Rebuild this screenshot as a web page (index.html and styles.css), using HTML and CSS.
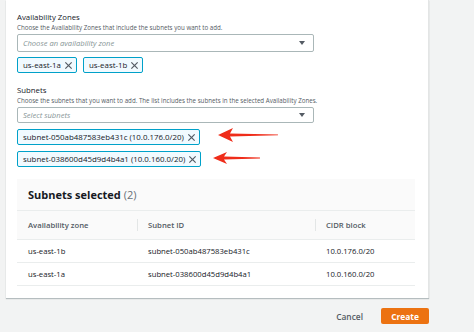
FILE: index.html
```html
<!DOCTYPE html>
<html lang="en">
<head>
  <meta charset="UTF-8" />
  <meta name="viewport" content="width=device-width, initial-scale=1.0"/>
  <title>Create subnet</title>
  <link rel="stylesheet" href="styles.css">
</head>
<body>
  <div class="panel">
    <div class="field">
      <div class="label">Availability Zones</div>
      <div class="desc">Choose the Availability Zones that include the subnets you want to add.</div>
      <div class="select az-select">
        <span class="placeholder">Choose an availability zone</span>
        <span class="caret"></span>
      </div>
      <div class="tokens tokens-row">
        <div class="token">us-east-1a <svg class="x" viewBox="0 0 10 10"><path d="M1.5 1.5 L8.5 8.5 M8.5 1.5 L1.5 8.5"/></svg></div>
        <div class="token">us-east-1b <svg class="x" viewBox="0 0 10 10"><path d="M1.5 1.5 L8.5 8.5 M8.5 1.5 L1.5 8.5"/></svg></div>
      </div>
    </div>

    <div class="field subnets">
      <div class="label">Subnets</div>
      <div class="desc">Choose the subnets that you want to add. The list includes the subnets in the selected Availability Zones.</div>
      <div class="select subnet-select">
        <span class="placeholder">Select subnets</span>
        <span class="caret"></span>
      </div>
      <div class="tokens">
        <div class="token">subnet-050ab487583eb431c (10.0.176.0/20) <svg class="x" viewBox="0 0 10 10"><path d="M1.5 1.5 L8.5 8.5 M8.5 1.5 L1.5 8.5"/></svg></div>
        <div class="token">subnet-038600d45d9d4b4a1 (10.0.160.0/20) <svg class="x" viewBox="0 0 10 10"><path d="M1.5 1.5 L8.5 8.5 M8.5 1.5 L1.5 8.5"/></svg></div>
      </div>
      <!-- annotation arrows drawn over the screenshot -->
      <svg class="arrow arrow-1" viewBox="0 0 75 20"><polygon points="8,10 23,3 20,8.6 68,9.4 68,10.2 20,11.6 23,17"/></svg>
      <svg class="arrow arrow-2" viewBox="0 0 75 20"><polygon points="8,10 22,4 19,8.6 55,9.5 55,10.4 19,11.6 22,16"/></svg>
    </div>

    <div class="selected">
      <div class="selected-head">Subnets selected <span class="count">(2)</span></div>
      <table>
        <thead>
          <tr>
            <th class="c1">Availability zone</th>
            <th class="c2"><span>Subnet ID</span></th>
            <th class="c3"><span>CIDR block</span></th>
          </tr>
        </thead>
        <tbody>
          <tr>
            <td>us-east-1b</td>
            <td>subnet-050ab487583eb431c</td>
            <td>10.0.176.0/20</td>
          </tr>
          <tr>
            <td>us-east-1a</td>
            <td>subnet-038600d45d9d4b4a1</td>
            <td>10.0.160.0/20</td>
          </tr>
        </tbody>
      </table>
    </div>
  </div>

  <footer>
    <span class="cancel">Cancel</span>
    <button class="create">Create</button>
  </footer>
</body>
</html>
```

FILE: styles.css
```css
:root {
  --bg: #f2f3f3;
  --text: #16191f;
  --muted: #545b64;
  --line: #eaeded;
  --token-bg: #f1faff;
  --token-border: #00a1c9;
  --orange: #ec7211;
  --arrow: #ef2d1a;
}

body {
  font-family: 'Open Sans', 'Noto Sans', sans-serif;
  background: var(--bg);
  color: var(--text);
  margin: 0;
  padding: 0;
}

.panel {
  position: relative;
  box-sizing: border-box;
  width: 423px;
  margin-left: 6px;
  padding: 12px 11px 12px 11px;
  background: #fff;
  border-right: 1px solid #e3e5e5;
  box-shadow: 0 1px 1px rgba(0, 28, 36, 0.25);
}

.label {
  font-size: 7.8px;
  line-height: 11px;
  color: var(--text);
}

.desc {
  font-size: 6.2px;
  line-height: 9px;
  color: var(--muted);
}

.select {
  box-sizing: border-box;
  width: 297px;
  height: 18px;
  margin-top: 2px;
  border: 1px solid #aab7b8;
  border-radius: 2px;
  display: flex;
  align-items: center;
  justify-content: space-between;
  padding: 0 8px 0 5px;
}

.subnet-select {
  height: 16px;
}

.placeholder {
  font-size: 7.6px;
  font-style: italic;
  color: #879596;
}

.caret {
  width: 0;
  height: 0;
  border-left: 3.5px solid transparent;
  border-right: 3.5px solid transparent;
  border-top: 4px solid var(--muted);
}

.tokens {
  display: flex;
  flex-direction: column;
  align-items: flex-start;
  gap: 6px;
  margin-top: 6px;
}

.tokens-row {
  flex-direction: row;
  gap: 6px;
  margin-top: 5px;
}

.token {
  box-sizing: border-box;
  height: 16px;
  display: flex;
  align-items: center;
  gap: 3px;
  padding: 0 3px 0 5px;
  background: var(--token-bg);
  border: 1px solid var(--token-border);
  border-radius: 2px;
  font-size: 7.9px;
  color: var(--text);
}

.x {
  width: 9px;
  height: 9px;
  stroke: var(--muted);
  stroke-width: 1.3;
  fill: none;
}

.subnets {
  position: relative;
  margin-top: 12px;
}

.arrow {
  position: absolute;
  width: 75px;
  height: 20px;
  fill: var(--arrow);
}

.arrow-1 {
  left: 193px;
  top: 40px;
}

.arrow-2 {
  left: 188px;
  top: 63px;
}

.selected {
  margin-top: 12px;
  width: 398px;
  background: #fafafa;
}

.selected-head {
  height: 32px;
  display: flex;
  align-items: center;
  padding-left: 11px;
  font-size: 11px;
  font-weight: bold;
  color: var(--text);
  border-bottom: 1px solid var(--line);
  box-sizing: border-box;
}

.count {
  font-weight: normal;
  color: #687078;
  margin-left: 3px;
}

table {
  width: 100%;
  border-collapse: collapse;
  font-size: 7.7px;
}

th {
  height: 28px;
  text-align: left;
  font-weight: 600;
  color: var(--muted);
  padding: 0;
  border-bottom: 1px solid var(--line);
}

th span {
  display: block;
  border-left: 1px solid #e3e6e6;
  padding-left: 10px;
  line-height: 12px;
}

th.c1 {
  width: 109px;
  padding-left: 11px;
}

th.c2 {
  width: 178px;
}

td {
  height: 22px;
  padding: 0 0 0 11px;
  background: #fff;
  color: var(--text);
  border-bottom: 1px solid var(--line);
}

footer {
  box-sizing: border-box;
  width: 423px;
  margin-left: 6px;
  padding-top: 10px;
  display: flex;
  justify-content: flex-end;
  align-items: center;
  gap: 18px;
}

.cancel {
  font-size: 8.4px;
  font-weight: 600;
  color: var(--muted);
}

.create {
  width: 48px;
  height: 16px;
  padding: 0;
  border: none;
  border-radius: 2px;
  background: var(--orange);
  color: #fff;
  font-family: inherit;
  font-size: 8.4px;
  font-weight: bold;
}
```
